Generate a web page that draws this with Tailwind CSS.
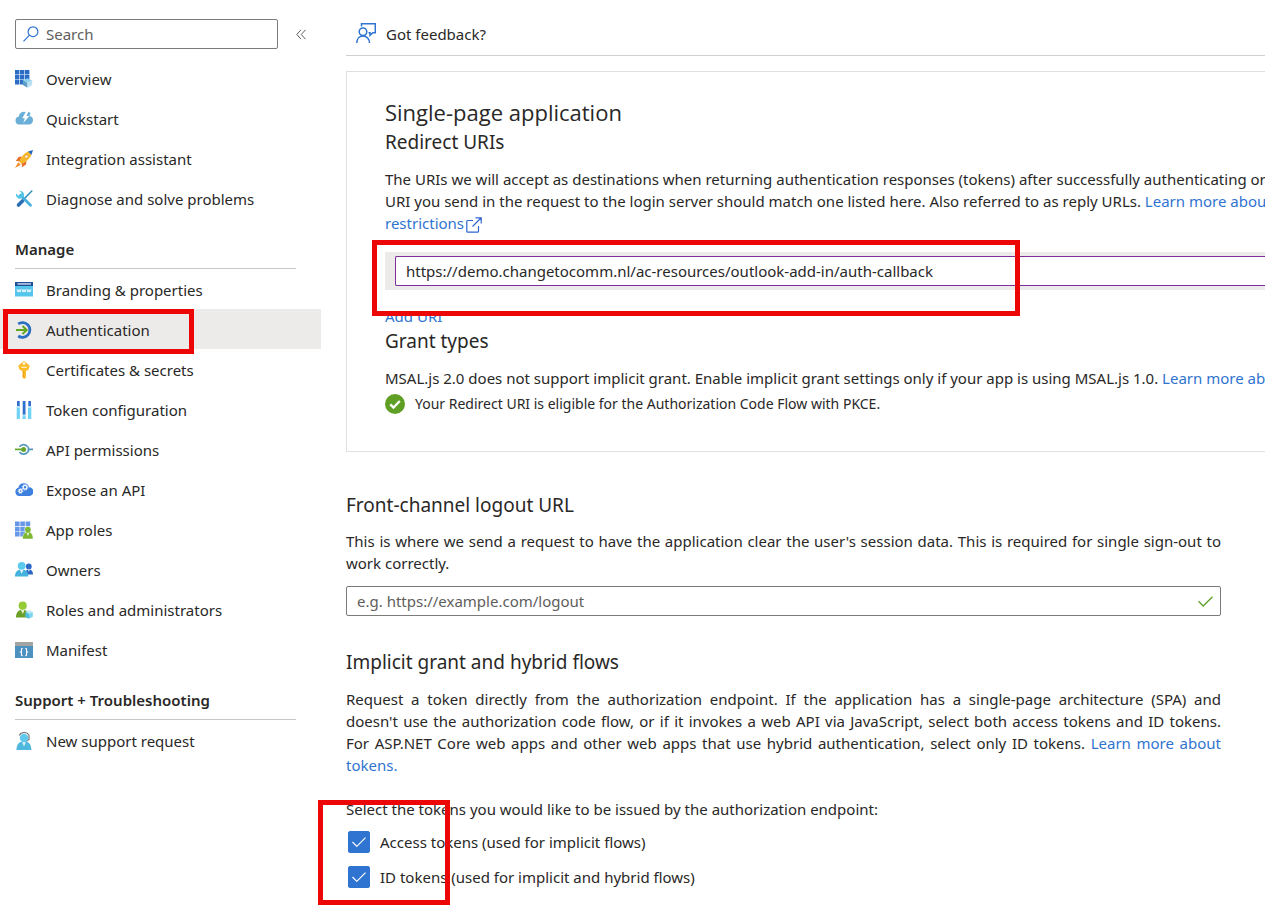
<!DOCTYPE html>
<html lang="en">
<head>
<meta charset="utf-8">
<meta name="viewport" content="width=device-width, initial-scale=1">
<title>Authentication</title>
<script src="https://cdn.jsdelivr.net/npm/@tailwindcss/browser@4"></script>
</head>
<body class="flex min-h-screen overflow-x-hidden bg-white font-['Noto_Sans','Open_Sans',sans-serif] text-[15px] leading-[22px] text-[#292827]">

<aside class="w-[321px] shrink-0 pt-[19px]">
  <div class="flex items-center pl-[15px]">
    <label class="flex h-[30px] w-[263px] items-center gap-[7px] rounded-xs border border-[#7d7b79] pl-[7px]">
      <svg class="size-4 shrink-0" viewBox="0 0 16 16" fill="none" stroke="#2f74d0" stroke-width="1.2"><circle cx="10" cy="5.7" r="4.9"/><path d="M6.5 9.2.5 15.3"/></svg>
      <input type="search" aria-label="Search" placeholder="Search" class="w-full bg-transparent outline-none placeholder:text-[#605e5c]">
    </label>
    <button type="button" aria-label="Collapse menu" class="ml-[18px]">
      <svg class="h-[11px] w-[10px]" viewBox="0 0 10 11" fill="none" stroke="#605e5c"><path d="M5 .8.8 5.5 5 10.2M9.5.8 5.3 5.5l4.2 4.7"/></svg>
    </button>
  </div>

  <nav aria-label="Application" class="pt-[10px]">
    <ul>
      <li><a href="#" class="flex h-10 items-center gap-[13px] pl-[15px]">
        <svg class="size-[18px]" viewBox="0 0 18 18"><path fill="#2b6cc4" d="M0 0h4.4v4.4H0zM5 0h4.4v4.4H5zM10 0h4.4v4.4H10zM0 5h4.4v4.4H0zM5 5h4.4v4.4H5zM10 5h4.4v4.4H10zM0 10h4.4v4.4H0zM5 10h4.4v4.4H5z"/><path fill="#8fd0ee" d="m12.5 8.2 4.7 2.2-4.7 2.3-4.8-2.3z"/><path fill="#5b9fc9" d="m7.7 10.4 4.8 2.3v5L7.7 15z"/><path fill="#b9e0f2" d="m17.2 10.4-4.7 2.3v5l4.7-2.7z"/></svg>
        Overview</a></li>
      <li><a href="#" class="flex h-10 items-center gap-[13px] pl-[15px]">
        <svg class="size-[18px]" viewBox="0 0 18 18"><path fill="#6bafd8" d="M4 14.500a4 4 0 0 1-.2-7.900A5.200 5.200 0 0 1 10.700 2L7.300 8.200h2.500L8.300 13l6-7h-2.800l1.900-4.200L15.500 3l-1 3A4.300 4.300 0 0 1 14 14.500z"/></svg>
        Quickstart</a></li>
      <li><a href="#" class="flex h-10 items-center gap-[13px] pl-[15px]">
        <svg class="size-[18px]" viewBox="0 0 18 18"><path fill="#e8722a" d="m7 6.500-3.500.4L.8 11l4 .2zM11.500 11l-.4 3.500L7 17.300l-.2-4z"/><path fill="#f08a24" d="m3.200 12.200 2.600 2.600L0 18z"/><path fill="#f8b92b" d="M4.300 11.800C6 7.500 9 3.200 13 1.600l3.400 3.400C14.800 9 10.500 12 6.200 13.700z"/><path fill="#2766b8" d="M13 1.600 18 0l-1.600 5z"/><circle cx="11.400" cy="6.600" r="1.700" fill="#fff3dc" stroke="#d58a22" stroke-width=".6"/></svg>
        Integration assistant</a></li>
      <li><a href="#" class="flex h-10 items-center gap-[13px] pl-[15px]">
        <svg class="size-[18px]" viewBox="0 0 18 18" fill="none"><path stroke="#318dba" stroke-width="1.500" stroke-linecap="round" d="M16.800 1 9 9"/><path stroke="#2b6eb5" stroke-width="3.600" stroke-linecap="round" d="m3.500 15 4-4"/><path stroke="#45aed9" stroke-width="2.800" stroke-linecap="round" d="m5.500 5.200 10 10"/><path fill="#50c3e8" d="M4.200.8a4.200 4.200 0 0 1 4.600 5.500L6 8.600A4.200 4.200 0 0 1 1 3.500l2.500 2.200L6 5l.4-2.200z"/></svg>
        Diagnose and solve problems</a></li>
    </ul>

    <h2 class="mr-[25px] ml-[15px] flex h-[50px] items-center border-b border-[#c8c6c4] pt-[10px] font-semibold">Manage</h2>
    <ul>
      <li><a href="#" class="flex h-10 items-center gap-[13px] pt-0.5 pl-[15px]">
        <svg class="size-[18px]" viewBox="0 0 18 18"><path fill="#56c5ec" d="M0 1h18v14.500H0z"/><path fill="#1f4f96" d="M0 1h18v4H0z"/><path fill="#dbe7f5" d="M2.500 2.300H16v1.300H2.500z"/><path fill="none" stroke="#fff" stroke-width=".9" d="m2 8.300 1 2.800 1-2.500 1 2.500 1-2.800m1 0 1 2.800 1-2.500 1 2.500 1-2.800m1 0 1 2.800 1-2.500 1 2.500 1-2.800"/></svg>
        Branding &amp; properties</a></li>
      <li class="relative"><a href="#" aria-current="page" class="flex h-10 items-center gap-[13px] bg-[#edebe9] pt-0.5 pl-[15px]">
        <svg class="size-[18px]" viewBox="0 0 18 18" fill="none"><path stroke="#2c70c4" stroke-width="2.800" d="M3.200 2.900A7.400 7.400 0 1 1 3.200 15"/><path stroke="#63a620" stroke-width="2" d="M1 9h10M7.500 5 11.700 9l-4.200 4"/></svg>
        Authentication</a>
        <span class="pointer-events-none absolute top-0 left-[3px] h-[45px] w-[191px] border-5 border-[#ec0606]"></span></li>
      <li><a href="#" class="flex h-10 items-center gap-[13px] pt-0.5 pl-[15px]">
        <svg class="size-[18px]" viewBox="0 0 18 18"><path fill="#fbbd2d" d="m9 0 5.300 4.300a1.200 1.200 0 0 1 .3 1.200L13.500 8.800 11 10v6.500L9.300 18 7.400 16.500V10L4.500 8.800 3.400 5.500a1.200 1.200 0 0 1 .3-1.200z"/><path fill="#e39a16" d="M8.300 10h.9v6.500h-.9z"/><path fill="#fff" d="M6.300 5.800h5.400v.9H6.300z"/><circle cx="9" cy="2.500" r="1.200" fill="#fff"/></svg>
        Certificates &amp; secrets</a></li>
      <li><a href="#" class="flex h-10 items-center gap-[13px] pt-0.5 pl-[15px]">
        <svg class="size-[18px]" viewBox="0 0 18 18"><path fill="#70d2f5" d="M1.700 6h3.200v12H1.700zM13 6h3.300v12H13zM7.500 15h3.200v3H7.500z"/><path fill="#2f70cf" d="M2 0h2.700v6H2zM7.700 0h2.800v14H7.700zM13.300 0H16v6h-2.700z"/><path fill="#b4e2f7" d="M1.700 5h3.200v2H1.700zM13 5h3.300v2H13zM7.500 13.500h3.200v2H7.500z"/></svg>
        Token configuration</a></li>
      <li><a href="#" class="flex h-10 items-center gap-[13px] pt-0.5 pl-[15px]">
        <svg class="size-[18px]" viewBox="0 0 18 18" fill="none"><path stroke="#5498bd" stroke-width="1.700" d="M4.500 5.800a5 5 0 0 1 8.200 0M4.500 11a5 5 0 0 0 8.200 0M13 5.800a5.500 5.500 0 0 1 0 5.200M13.500 8.400H18"/><path stroke="#65a52b" stroke-width="1.700" d="M0 8.400h7"/><circle cx="8.600" cy="8.400" r="2.500" fill="#65a52b"/></svg>
        API permissions</a></li>
      <li><a href="#" class="flex h-10 items-center gap-[13px] pt-0.5 pl-[15px]">
        <svg class="size-[18px]" viewBox="0 0 18 18" fill="none"><path fill="#3d80df" d="M4.200 15a4.200 4.200 0 0 1-.8-8.200 5.500 5.500 0 0 1 10.700-.5A4.300 4.300 0 0 1 14 15z"/><circle cx="10" cy="6.300" r="1.900" stroke="#fff" stroke-width="1.300"/><circle cx="10" cy="6.300" r="2.900" stroke="#e4efff" stroke-width=".9" stroke-dasharray="1.200 1.100"/><circle cx="5.500" cy="10" r="1.500" stroke="#fff" stroke-width="1.300"/><circle cx="5.500" cy="10" r="2.400" stroke="#e4efff" stroke-width=".8" stroke-dasharray="1 .9"/></svg>
        Expose an API</a></li>
      <li><a href="#" class="flex h-10 items-center gap-[13px] pt-0.5 pl-[15px]">
        <svg class="size-[18px]" viewBox="0 0 18 18"><path fill="#6798e8" d="M0 .5h4.600v4.600H0zM5.300.5h4.600v4.600H5.300zM10.600.5h4.600v4.600h-4.600zM0 5.800h4.600v4.600H0zM5.300 5.800h4.600v4.600H5.300zM10.600 5.800h4.600v4.600h-4.600zM0 11h4.600v4.600H0zM5.300 11h4.600v4.600H5.300z"/><path fill="#7db833" stroke="#fff" stroke-width=".5" d="M7.500 18v-1.500c.5-3 1.500-5 3.500-5.300a3.200 3.200 0 1 1 3.700 0c2 .4 3 2.400 3.300 5.300V18z"/><path fill="#e5f3d2" d="m11.500 11.800 1.400 3.500 1.400-3.500z"/></svg>
        App roles</a></li>
      <li><a href="#" class="flex h-10 items-center gap-[13px] pt-0.5 pl-[15px]">
        <svg class="size-[18px]" viewBox="0 0 18 18"><circle cx="13.800" cy="5.500" r="2.900" fill="#2c68c4"/><path fill="#2c68c4" d="M10 13.500c0-3 1.200-5.200 3.800-5.200 2.700 0 4.200 2.200 4.200 5.200z"/><path fill="#d9e8fb" d="m12.500 8.300 1.300 2.500 1.300-2.500z"/><path fill="#43b2dc" d="M0 15.500c0-4 1.800-7 6.700-7s6.600 3 6.600 7z"/><circle cx="6.700" cy="4.800" r="3.900" fill="#5bcaed"/><path fill="#e4f7fd" d="m4.900 8.700 1.800 4 1.800-4z"/></svg>
        Owners</a></li>
      <li><a href="#" class="flex h-10 items-center gap-[13px] pt-0.5 pl-[15px]">
        <svg class="size-[18px]" viewBox="0 0 18 18"><path fill="#6c9f27" d="M1 16.500c0-4.500 2-7.700 6.700-7.700 4.500 0 6.300 3.200 6.300 7.700z"/><circle cx="7.700" cy="4.700" r="4.100" fill="#96cb38"/><path fill="#eaf5da" d="m6 9 1.800 4 1.700-4z"/><path fill="#b5e8f7" d="m14 9.300 3.800 1.800L14 13l-3.700-1.900z"/><path fill="#49bde0" d="M10.300 11.100 14 13v4.700L10.300 15.800z"/><path fill="#7bd5ee" d="M17.800 11.100 14 13v4.700l3.800-1.900z"/></svg>
        Roles and administrators</a></li>
      <li><a href="#" class="flex h-10 items-center gap-[13px] pt-0.5 pl-[15px]">
        <svg class="size-[18px]" viewBox="0 0 18 18" fill="none"><path fill="#4d91c1" d="M0 1h18v16H0z"/><path fill="#a4a4a4" d="M0 1h18v4H0z"/><path stroke="#fff" stroke-width="1.100" d="M7.700 7.500H7L6.500 8v2.500l-1 .6 1 .6v2.500l.5.500h.7M10.300 7.500h.7l.5.500v2.500l1 .6-1 .6v2.500l-.5.500h-.7"/></svg>
        Manifest</a></li>
    </ul>

    <h2 class="mr-[25px] ml-[15px] flex h-[51px] items-center border-b border-[#c8c6c4] pt-3 font-semibold">Support + Troubleshooting</h2>
    <ul>
      <li><a href="#" class="flex h-10 items-center gap-[13px] pt-0.5 pl-[15px]">
        <svg class="size-[18px]" viewBox="0 0 18 18"><path fill="none" stroke="#77777a" stroke-width="1.200" d="M4.200 3.500C6-.5 12-.4 14 3.200v4.300l-3 2"/><path fill="#4eb8dd" d="M1.500 18v-1.500C2.300 12 4 9.500 9 9.500s6.500 2.500 7.300 7V18z"/><circle cx="9" cy="6" r="4.200" fill="#60caee"/><path fill="#e2f6fc" d="M7.200 10.300 9 14.500l1.800-4.200z"/></svg>
        New support request</a></li>
    </ul>
  </nav>
</aside>

<main class="min-w-0 flex-1 pb-[15px] pl-[25px]">
  <div class="flex h-14 items-center border-b border-[#d2d0ce] pt-[13px]">
    <button type="button" class="flex items-center gap-[10px] pl-[10px]">
      <svg class="mb-0.5 size-5" viewBox="0 0 20 20" fill="none" stroke="#2f74d0" stroke-width="1.500"><path d="M5.500 3.500V.8h13.800v9h-2.500L14 12.300V9.800h-1.500"/><circle cx="7" cy="8.800" r="3.800"/><path d="M.8 20c0-4 2.400-7 6.200-7s6.500 3 6.500 7"/></svg>
      Got feedback?
    </button>
  </div>

  <section class="mt-[15px] overflow-hidden border border-r-0 border-[#e1dfdd] pt-[26px] pb-9 pl-[38px] whitespace-nowrap">
    <h1 class="font-['Open_Sans','Noto_Sans',sans-serif] text-[22px] leading-7">Single-page application</h1>
    <h2 class="text-[19px] leading-8">Redirect URIs</h2>
    <p class="mt-[10px]">The URIs we will accept as destinations when returning authentication responses (tokens) after successfully authenticating or<br>
      URI you send in the request to the login server should match one listed here. Also referred to as reply URLs. <a href="#" class="text-[#2f74d0]">Learn more about<br>
      restrictions<svg class="ml-0.5 inline size-4" viewBox="0 0 16 16" fill="none" stroke="#2f64d0" stroke-width="1.200"><path d="M7 3.500H1.800a1 1 0 0 0-1 1v9.700a1 1 0 0 0 1 1h9.700a1 1 0 0 0 1-1V9M9.500.8h5.700v5.700M15 1 6.500 9.500"/></svg></a></p>
    <div class="relative mt-[18px] bg-[#edebe9] py-1 pl-[10px]">
      <input type="url" aria-label="Redirect URI" value="https://demo.changetocomm.nl/ac-resources/outlook-add-in/auth-callback" class="block h-[30px] w-full rounded-l-xs border border-r-0 border-[#7e2f9c] bg-white pl-[10px] outline-none">
      <span class="pointer-events-none absolute -top-3 -left-[13px] h-[76px] w-[648px] border-5 border-[#ec0606]"></span>
    </div>
    <button type="button" class="mt-[15px] block text-[#2f74d0]">Add URI</button>
    <h2 class="text-[19px] leading-7">Grant types</h2>
    <p class="mt-3">MSAL.js 2.0 does not support implicit grant. Enable implicit grant settings only if your app is using MSAL.js 1.0. <a href="#" class="text-[#2f74d0]">Learn more about</a></p>
    <p class="mt-1 flex items-center gap-[10px] text-[14px]">
      <svg class="size-5" viewBox="0 0 20 20" fill="none"><circle cx="10" cy="10" r="10" fill="#5f9f24"/><path stroke="#fff" stroke-width="2.400" d="m5.300 10.300 3.200 3.200 6.300-6.500"/></svg>
      Your Redirect URI is eligible for the Authorization Code Flow with PKCE.
    </p>
  </section>

  <section class="mt-[39px] mr-11">
    <h2 class="text-[19px] leading-7">Front-channel logout URL</h2>
    <p class="mt-[11px] text-justify">This is where we send a request to have the application clear the user's session data. This is required for single sign-out to work correctly.</p>
    <label class="mt-3 flex h-[30px] items-center rounded-xs border border-[#7d7b79] pr-[7px] pl-[10px]">
      <input type="url" aria-label="Front-channel logout URL" placeholder="e.g. https://example.com/logout" class="w-full bg-transparent outline-none placeholder:text-[#605e5c]">
      <svg class="h-[11px] w-[15px] shrink-0" viewBox="0 0 15 11" fill="none" stroke="#5fa127" stroke-width="1.300"><path d="m.5 5.300 4.700 4.700L14.500.7"/></svg>
    </label>
  </section>

  <section class="mt-8 mr-11">
    <h2 class="text-[19px] leading-7">Implicit grant and hybrid flows</h2>
    <p class="mt-3 text-justify">Request a token directly from the authorization endpoint. If the application has a single-page architecture (SPA) and doesn't&nbsp;use the authorization code flow, or if it invokes a web API via JavaScript, select both access tokens and ID tokens. For&nbsp;ASP.NET Core web apps and other web apps that use hybrid authentication, select only ID tokens. <a href="#" class="text-[#2f74d0]">Learn more about tokens.</a></p>
    <div class="relative mt-[22px]">
      <fieldset>
        <legend>Select the tokens you would like to be issued by the authorization endpoint:</legend>
        <div class="mt-[11px] flex flex-col items-start gap-[13px] pl-0.5">
          <label class="flex items-center gap-[10px]">
            <span class="grid place-items-center">
              <input type="checkbox" checked class="col-start-1 row-start-1 size-[22px] appearance-none rounded-xs border border-[#2f74d0] checked:bg-[#2f74d0]">
              <svg class="pointer-events-none col-start-1 row-start-1 h-[10px] w-[14px]" viewBox="0 0 14 10" fill="none" stroke="#fff" stroke-width="1.200"><path d="m.5 5 4.300 4.300L13.500.6"/></svg>
            </span>
            Access tokens (used for implicit flows)
          </label>
          <label class="flex items-center gap-[10px]">
            <span class="grid place-items-center">
              <input type="checkbox" checked class="col-start-1 row-start-1 size-[22px] appearance-none rounded-xs border border-[#2f74d0] checked:bg-[#2f74d0]">
              <svg class="pointer-events-none col-start-1 row-start-1 h-[10px] w-[14px]" viewBox="0 0 14 10" fill="none" stroke="#fff" stroke-width="1.200"><path d="m.5 5 4.300 4.300L13.500.6"/></svg>
            </span>
            ID tokens (used for implicit and hybrid flows)
          </label>
        </div>
      </fieldset>
      <span class="pointer-events-none absolute top-0.5 -left-7 h-[105px] w-[132px] border-5 border-[#ec0606]"></span>
    </div>
  </section>
</main>
</body>
</html>
